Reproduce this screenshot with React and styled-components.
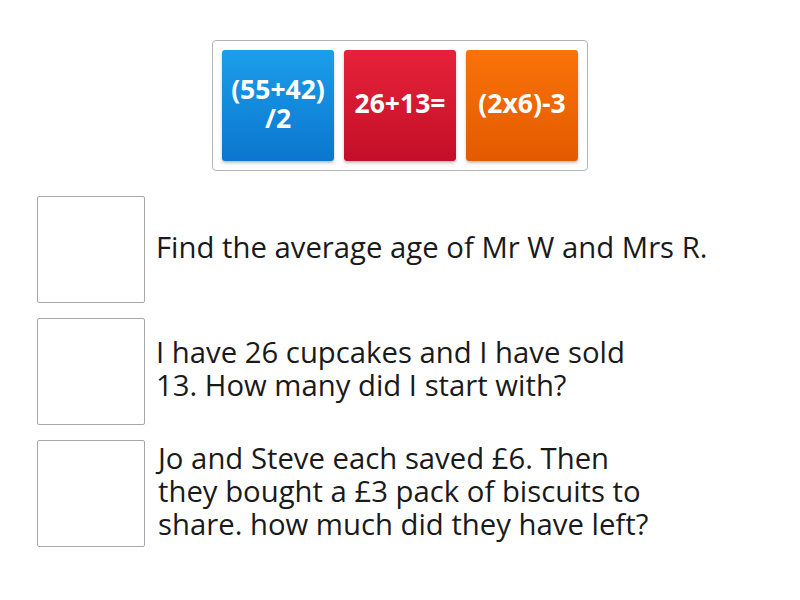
import styled, { createGlobalStyle } from "styled-components";

const GlobalStyle = createGlobalStyle`
    body {
        margin: 0;
        background: #fff;
        font-family: "Open Sans", "Liberation Sans", sans-serif;
    }
`

const Page = styled.div`
    width: 800px;
    height: 600px;
    display: flex;
    flex-direction: column;
    align-items: center;
    padding-top: 40px;
    box-sizing: border-box;
`

const Tray = styled.div`
    display: flex;
    gap: 10px;
    padding: 9px;
    border: 1px solid #b4b4b4;
    border-radius: 4px;
`

const Tile = styled.div`
    width: 112px;
    height: 111px;
    border-radius: 3px;
    background: linear-gradient(to bottom, ${p => p.top}, ${p => p.bottom});
    box-shadow: 0 2px 3px rgba(0, 0, 0, 0.25);
    display: flex;
    align-items: center;
    justify-content: center;
    text-align: center;
    color: #fff;
    font-weight: 700;
    font-size: 26.5px;
    line-height: 29px;
    padding: 0 4px 4px;
    box-sizing: border-box;
`

const List = styled.div`
    align-self: stretch;
    display: flex;
    flex-direction: column;
    gap: 15px;
    padding: 25px 0 0 37px;
`

const Row = styled.div`
    display: flex;
    align-items: center;
    gap: 11px;
`

const DropBox = styled.div`
    width: 108px;
    height: 107px;
    box-sizing: border-box;
    border: 1px solid #a8a8a8;
    border-radius: 2px;
    flex-shrink: 0;
`

const Prompt = styled.div`
    max-width: ${p => p.width}px;
    padding-left: ${p => p.indent || 0}px;
    margin-top: -5px;
    font-size: 29.3px;
    line-height: 33px;
    color: #1a1a1a;
`

const tiles = [
    { text: "(55+42) /2", top: "#1b9eea", bottom: "#0b76cf" },
    { text: "26+13=", top: "#e6223a", bottom: "#c40f28" },
    { text: "(2x6)-3", top: "#fa7208", bottom: "#e45a00" },
]

const prompts = [
    { text: "Find the average age of Mr W and Mrs R.", width: 600 },
    { text: "I have 26 cupcakes and I have sold 13. How many did I start with?", width: 496 },
    { text: "Jo and Steve each saved £6. Then they bought a £3 pack of biscuits to share. how much did they have left?", width: 496, indent: 2 },
]

export default function App() {
    return (
        <>
            <GlobalStyle />
            <Page>
                <Tray>
                    {tiles.map(t => (
                        <Tile key={t.text} top={t.top} bottom={t.bottom}>{t.text}</Tile>
                    ))}
                </Tray>
                <List>
                    {prompts.map(p => (
                        <Row key={p.text}>
                            <DropBox />
                            <Prompt width={p.width} indent={p.indent}>{p.text}</Prompt>
                        </Row>
                    ))}
                </List>
            </Page>
        </>
    )
}
